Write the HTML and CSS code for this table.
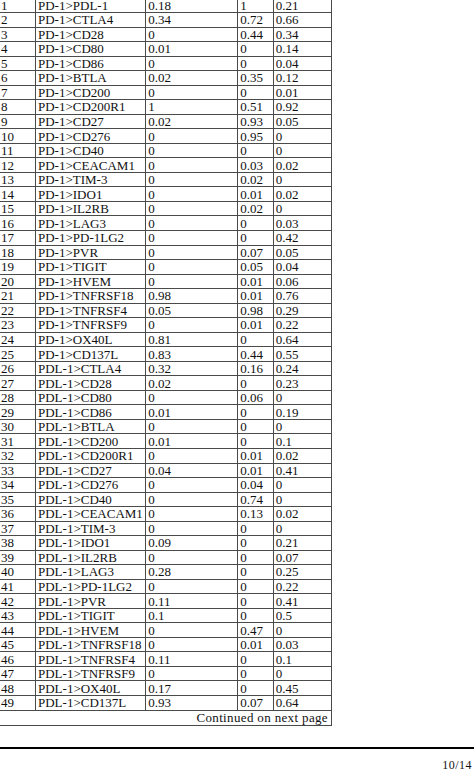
FILE: index.html
```html
<!DOCTYPE html>
<html>
<head>
<meta charset="utf-8">
<link rel="stylesheet" href="styles.css">
</head>
<body>
<div class="page">
<table class="data">
<colgroup><col class="c-id"><col class="c-pair"><col class="c-a"><col class="c-b"><col class="c-c"></colgroup>
<tbody>
<tr><td>1</td><td>PD-1&gt;PDL-1</td><td>0.18</td><td>1</td><td>0.21</td></tr>
<tr><td>2</td><td>PD-1&gt;CTLA4</td><td>0.34</td><td>0.72</td><td>0.66</td></tr>
<tr><td>3</td><td>PD-1&gt;CD28</td><td>0</td><td>0.44</td><td>0.34</td></tr>
<tr><td>4</td><td>PD-1&gt;CD80</td><td>0.01</td><td>0</td><td>0.14</td></tr>
<tr><td>5</td><td>PD-1&gt;CD86</td><td>0</td><td>0</td><td>0.04</td></tr>
<tr><td>6</td><td>PD-1&gt;BTLA</td><td>0.02</td><td>0.35</td><td>0.12</td></tr>
<tr><td>7</td><td>PD-1&gt;CD200</td><td>0</td><td>0</td><td>0.01</td></tr>
<tr><td>8</td><td>PD-1&gt;CD200R1</td><td>1</td><td>0.51</td><td>0.92</td></tr>
<tr><td>9</td><td>PD-1&gt;CD27</td><td>0.02</td><td>0.93</td><td>0.05</td></tr>
<tr><td>10</td><td>PD-1&gt;CD276</td><td>0</td><td>0.95</td><td>0</td></tr>
<tr><td>11</td><td>PD-1&gt;CD40</td><td>0</td><td>0</td><td>0</td></tr>
<tr><td>12</td><td>PD-1&gt;CEACAM1</td><td>0</td><td>0.03</td><td>0.02</td></tr>
<tr><td>13</td><td>PD-1&gt;TIM-3</td><td>0</td><td>0.02</td><td>0</td></tr>
<tr><td>14</td><td>PD-1&gt;IDO1</td><td>0</td><td>0.01</td><td>0.02</td></tr>
<tr><td>15</td><td>PD-1&gt;IL2RB</td><td>0</td><td>0.02</td><td>0</td></tr>
<tr><td>16</td><td>PD-1&gt;LAG3</td><td>0</td><td>0</td><td>0.03</td></tr>
<tr><td>17</td><td>PD-1&gt;PD-1LG2</td><td>0</td><td>0</td><td>0.42</td></tr>
<tr><td>18</td><td>PD-1&gt;PVR</td><td>0</td><td>0.07</td><td>0.05</td></tr>
<tr><td>19</td><td>PD-1&gt;TIGIT</td><td>0</td><td>0.05</td><td>0.04</td></tr>
<tr><td>20</td><td>PD-1&gt;HVEM</td><td>0</td><td>0.01</td><td>0.06</td></tr>
<tr><td>21</td><td>PD-1&gt;TNFRSF18</td><td>0.98</td><td>0.01</td><td>0.76</td></tr>
<tr><td>22</td><td>PD-1&gt;TNFRSF4</td><td>0.05</td><td>0.98</td><td>0.29</td></tr>
<tr><td>23</td><td>PD-1&gt;TNFRSF9</td><td>0</td><td>0.01</td><td>0.22</td></tr>
<tr><td>24</td><td>PD-1&gt;OX40L</td><td>0.81</td><td>0</td><td>0.64</td></tr>
<tr><td>25</td><td>PD-1&gt;CD137L</td><td>0.83</td><td>0.44</td><td>0.55</td></tr>
<tr><td>26</td><td>PDL-1&gt;CTLA4</td><td>0.32</td><td>0.16</td><td>0.24</td></tr>
<tr><td>27</td><td>PDL-1&gt;CD28</td><td>0.02</td><td>0</td><td>0.23</td></tr>
<tr><td>28</td><td>PDL-1&gt;CD80</td><td>0</td><td>0.06</td><td>0</td></tr>
<tr><td>29</td><td>PDL-1&gt;CD86</td><td>0.01</td><td>0</td><td>0.19</td></tr>
<tr><td>30</td><td>PDL-1&gt;BTLA</td><td>0</td><td>0</td><td>0</td></tr>
<tr><td>31</td><td>PDL-1&gt;CD200</td><td>0.01</td><td>0</td><td>0.1</td></tr>
<tr><td>32</td><td>PDL-1&gt;CD200R1</td><td>0</td><td>0.01</td><td>0.02</td></tr>
<tr><td>33</td><td>PDL-1&gt;CD27</td><td>0.04</td><td>0.01</td><td>0.41</td></tr>
<tr><td>34</td><td>PDL-1&gt;CD276</td><td>0</td><td>0.04</td><td>0</td></tr>
<tr><td>35</td><td>PDL-1&gt;CD40</td><td>0</td><td>0.74</td><td>0</td></tr>
<tr><td>36</td><td>PDL-1&gt;CEACAM1</td><td>0</td><td>0.13</td><td>0.02</td></tr>
<tr><td>37</td><td>PDL-1&gt;TIM-3</td><td>0</td><td>0</td><td>0</td></tr>
<tr><td>38</td><td>PDL-1&gt;IDO1</td><td>0.09</td><td>0</td><td>0.21</td></tr>
<tr><td>39</td><td>PDL-1&gt;IL2RB</td><td>0</td><td>0</td><td>0.07</td></tr>
<tr><td>40</td><td>PDL-1&gt;LAG3</td><td>0.28</td><td>0</td><td>0.25</td></tr>
<tr><td>41</td><td>PDL-1&gt;PD-1LG2</td><td>0</td><td>0</td><td>0.22</td></tr>
<tr><td>42</td><td>PDL-1&gt;PVR</td><td>0.11</td><td>0</td><td>0.41</td></tr>
<tr><td>43</td><td>PDL-1&gt;TIGIT</td><td>0.1</td><td>0</td><td>0.5</td></tr>
<tr><td>44</td><td>PDL-1&gt;HVEM</td><td>0</td><td>0.47</td><td>0</td></tr>
<tr><td>45</td><td>PDL-1&gt;TNFRSF18</td><td>0</td><td>0.01</td><td>0.03</td></tr>
<tr><td>46</td><td>PDL-1&gt;TNFRSF4</td><td>0.11</td><td>0</td><td>0.1</td></tr>
<tr><td>47</td><td>PDL-1&gt;TNFRSF9</td><td>0</td><td>0</td><td>0</td></tr>
<tr><td>48</td><td>PDL-1&gt;OX40L</td><td>0.17</td><td>0</td><td>0.45</td></tr>
<tr><td>49</td><td>PDL-1&gt;CD137L</td><td>0.93</td><td>0.07</td><td>0.64</td></tr>
<tr class="cont"><td colspan="5">Continued on next page</td></tr>
</tbody>
</table>
<div class="footer">
<div class="rule"></div>
<div class="pageno">10/14</div>
</div>
</div>
</body>
</html>
```

FILE: styles.css
```css
html, body {
  margin: 0;
  padding: 0;
  background: #ffffff;
}

body {
  font-family: "Liberation Serif", "Times New Roman", serif;
  color: #111;
  overflow: hidden;
}

.page {
  width: 474px;
  height: 772px;
}

.data {
  border-collapse: collapse;
  table-layout: fixed;
  width: 333px;
  margin-top: -2.5px;
  margin-left: -2px;
  font-size: 13px;
}

.c-id { width: 37px; }
.c-pair { width: 110.3px; }
.c-a { width: 92px; }
.c-b { width: 35.4px; }
.c-c { width: 58.3px; }

.data td {
  border: 1px solid #4a4a4a;
  padding: 0 0 0 2px;
  height: 13.54px;
  line-height: 13px;
  white-space: nowrap;
  overflow: hidden;
  vertical-align: middle;
}

.data tr.cont td {
  text-align: right;
  padding: 0 3px 0 0;
  height: 14.6px;
  letter-spacing: 0.35px;
}

.footer {
  margin-top: 21px;
}

.rule {
  height: 2px;
  background: #000;
}

.pageno {
  text-align: right;
  font-size: 12px;
  padding-right: 2px;
  margin-top: 9px;
  letter-spacing: 0.5px;
  line-height: 14px;
}
```
